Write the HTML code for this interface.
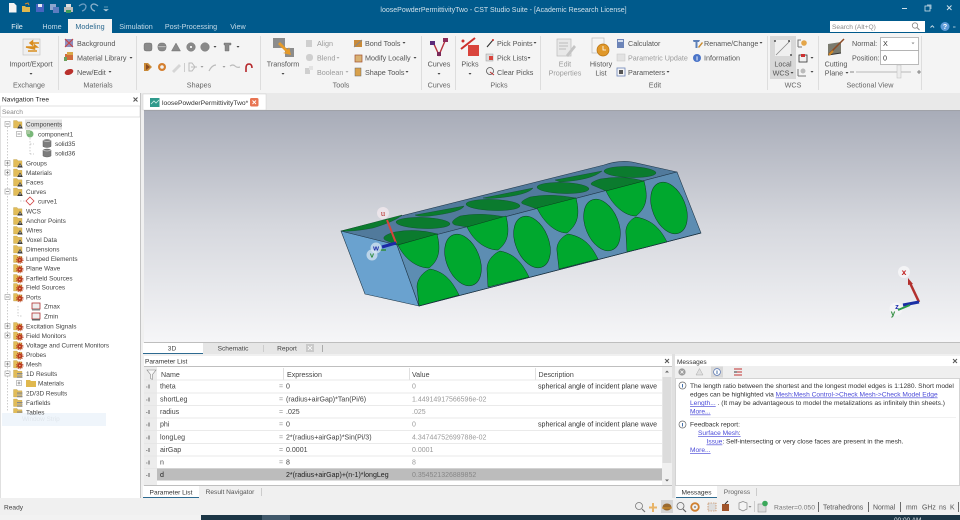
<!DOCTYPE html>
<html><head><meta charset="utf-8"><style>
html,body{margin:0;padding:0;background:#f0f0f0;width:960px;height:520px;overflow:hidden}
svg{position:absolute;left:0;top:0;display:block;filter:blur(.3px)}
text{font-family:"Liberation Sans",sans-serif;font-size:6.5px;fill:#444;white-space:pre}
.r{font-size:7.2px;fill:#555}
.m{text-anchor:middle}
.g{fill:#9b9b9b}
.gl{text-anchor:middle;font-size:7.2px;fill:#666}
.tab{font-size:7.2px;fill:#c5dbe8}
.n{font-size:6.4px;fill:#444}
.p{font-size:7.05px;fill:#444}
.q{font-size:6.6px;fill:#444}
.v{font-size:7px;fill:#9a9a9a}
.k{font-size:6.62px;fill:#333}
.l{font-size:6.62px;fill:#4a4ad8;text-decoration:underline}
</style></head><body>
<svg width="960" height="520" viewBox="0 0 960 520">
<defs>
<linearGradient id="vp" x1="0" y1="0" x2="0" y2="1"><stop offset="0" stop-color="#a8acb8"/><stop offset=".5" stop-color="#d6d8de"/><stop offset="1" stop-color="#f6f6f8"/></linearGradient>
<g id="fw"><path d="M-4.500,-3.500h3.500l1,1.300h4v6.200h-8.500z" fill="#e2bc58" stroke="#b09448" stroke-width=".3"/><path d="M2,0l2.800,4.500h-5.600z" fill="#3a3a3a"/><rect x="1.600" y="1.600" width=".9" height="1.600" fill="#eee"/></g>
<g id="fr"><path d="M-4.500,-3.500h3.500l1,1.300h4v6.200h-8.500z" fill="#e2bc58" stroke="#b09448" stroke-width=".3"/><circle cx="1.800" cy="1.500" r="2.500" fill="#b9361f"/><circle cx="1.800" cy="1.500" r="3.200" fill="none" stroke="#b9361f" stroke-width="1" stroke-dasharray="1 1"/><circle cx="1.800" cy="1.500" r=".8" fill="#f2c08a"/></g>
<g id="fg"><path d="M-4.500,-3.500h3.500l1,1.300h4v6.200h-8.500z" fill="#e2bc58" stroke="#b09448" stroke-width=".3"/><rect x="-1" y="-.5" width="5.500" height="1.100" fill="#888"/><rect x="-1" y="1.300" width="5.500" height="1.100" fill="#aaa"/><rect x="-1" y="3.100" width="5.500" height="1.100" fill="#888"/></g>
<g id="pm"><rect x="-2.500" y="-2.500" width="5" height="5" fill="#fff" stroke="#888" stroke-width=".5"/><path d="M-1.500,0h3" stroke="#555" stroke-width=".6"/></g>
<g id="pp"><rect x="-2.500" y="-2.500" width="5" height="5" fill="#fff" stroke="#888" stroke-width=".5"/><path d="M-1.500,0h3M0,-1.500v3" stroke="#555" stroke-width=".6"/></g>
<g id="gb"><path d="M-4,-3q4,-2 8,0v6q-4,2 -8,0z" fill="#7d7d7d" stroke="#5f5f5f" stroke-width=".5"/><path d="M-4,-3q4,2 8,0" fill="none" stroke="#c5c5c5" stroke-width=".7"/></g>
<g id="rk"><rect x="-5" y=".5" width="1.500" height="1" fill="#999"/><path d="M-2.500,-1.500v4M-1.500,-1.500v4" stroke="#888" stroke-width=".7"/></g>
<g id="dd"><path d="M-1.500,-1h3l-1.500,1.800z" fill="#444"/></g>
</defs>

<!-- window frame -->
<rect width="960" height="520" fill="#f0f0f0"/>
<rect width="960" height="33" fill="#005a8c"/>

<!-- quick access -->
<path d="M9,3h5l2.500,2.500v7h-7.500z" fill="#f4f4f4"/>
<path d="M22,6h3l1,1h4v5h-8z" fill="#e0b84e"/><path d="M25,4l3,-1 1,2" stroke="#d88a2a" fill="none"/>
<rect x="36" y="4" width="8" height="8" fill="#4664c0"/><rect x="38" y="4" width="4" height="3" fill="#e8e8f2"/>
<rect x="50" y="4" width="6" height="6" fill="#8ea6cf"/><rect x="53" y="7" width="6" height="6" fill="#5c7cc0"/>
<rect x="64" y="7" width="9" height="5" fill="#bdbdbd"/><rect x="66" y="4" width="5" height="3" fill="#ddd"/><rect x="66" y="10" width="5" height="3" fill="#3c9a58"/>
<path d="M79,6 q5,-4 7,0 q0,4 -4,5" fill="none" stroke="#6f9ec2" stroke-width="1.300"/>
<path d="M98,6 q-5,-4 -7,0 q0,4 4,5" fill="none" stroke="#8fb2cc" stroke-width="1.300"/>
<path d="M104,7h4M104,9.500h4l-2,1.500z" stroke="#b8cfdd" stroke-width=".6" fill="#b8cfdd"/>

<text x="503.500" y="12" class="tab m" style="font-size:7px;fill:#cfe0ea">loosePowderPermittivityTwo - CST Studio Suite - [Academic Research License]</text>
<!-- window controls -->
<path d="M902,8.500h5" stroke="#cfe0ea" stroke-width="1"/>
<rect x="925" y="6" width="5" height="5" fill="none" stroke="#cfe0ea" stroke-width=".8"/><path d="M927,5h4v4" fill="none" stroke="#cfe0ea" stroke-width=".7"/>
<path d="M947,5.500l4.500,4.500m0,-4.500l-4.500,4.500" stroke="#cfe0ea" stroke-width="1"/>

<!-- tabs -->
<rect x="68" y="19" width="44" height="14" fill="#f4f4f4"/>
<text x="17" y="29" class="tab m" style="fill:#e8f0f5">File</text>
<text x="52" y="29" class="tab m">Home</text>
<text x="90" y="29" class="tab m" style="fill:#2d6a90">Modeling</text>
<text x="136" y="29" class="tab m">Simulation</text>
<text x="191" y="29" class="tab m">Post-Processing</text>
<text x="238" y="29" class="tab m">View</text>

<!-- search -->
<rect x="830" y="21" width="95" height="11" fill="#fff"/>
<text x="832" y="29" style="font-size:6.6px;fill:#888">Search (Alt+Q)</text>
<circle cx="915" cy="25.500" r="2.700" fill="none" stroke="#888" stroke-width=".8"/><path d="M917,27.500l2.500,2.500" stroke="#888" stroke-width="1"/>
<path d="M930.500,27.500l1.800,-1.800 1.800,1.800" fill="none" stroke="#cfe0ea" stroke-width=".9"/>
<circle cx="945" cy="26.500" r="4.500" fill="#5d9bd8"/><text x="945" y="29" class="m" style="fill:#fff;font-size:7px;font-weight:bold">?</text>
<path d="M953,27h2.500" stroke="#cfe0ea" stroke-width=".8"/>

<!-- ribbon -->
<rect y="33" width="960" height="60" fill="#f4f4f4"/>
<g stroke="#dddddd" stroke-width="1">
<path d="M58.500,36v54M136.500,36v54M260.500,36v54M421.500,36v54M455.500,36v54M540.500,36v54M767.500,36v54M818.500,36v54M921.500,36v54"/>
</g>

<!-- Import/Export -->
<rect x="23" y="39" width="17" height="16" fill="#efefef" stroke="#bdbdbd" stroke-width=".6"/>
<path d="M30,43h9M30,43l2.500,-2v4zM26,47h11l-2.500,-2v4zM28,51h9" stroke="#d98d1f" stroke-width="1.500" fill="#d98d1f"/>
<text x="31" y="66.500" class="r m">Import/Export</text>
<use href="#dd" x="31" y="74"/>
<text x="29" y="87.500" class="gl">Exchange</text>

<!-- Materials -->
<rect x="65" y="39" width="8" height="8" fill="#8f8fc0"/><path d="M65,39l8,8M73,39l-8,8" stroke="#c24848" stroke-width="1.200"/>
<rect x="65" y="54" width="8" height="6" fill="#d06c3c"/><rect x="67" y="52" width="6" height="3" fill="#d9a748"/><rect x="64" y="57" width="3" height="4" fill="#6ca05c"/>
<ellipse cx="69" cy="72" rx="4.500" ry="2.800" fill="#b9302c" transform="rotate(-20 69 72)"/>
<text x="77" y="46" class="r">Background</text>
<text x="77" y="60.500" class="r">Material Library</text><use href="#dd" x="131" y="58"/>
<text x="77" y="75" class="r">New/Edit</text><use href="#dd" x="110" y="72"/>
<text x="98" y="87.500" class="gl">Materials</text>

<!-- Shapes -->
<g fill="#8a8a8a" stroke="#666" stroke-width=".4">
<rect x="144" y="43" width="8" height="8" rx="2"/>
<rect x="158" y="43" width="8" height="8" rx="3"/><rect x="158" y="46" width="8" height="1.500" fill="#ccc"/>
<path d="M176,43l4.500,8h-9z"/>
<circle cx="191" cy="47" r="4.300"/><circle cx="191" cy="47" r="1.500" fill="#eee"/>
<circle cx="205" cy="47" r="4.300"/>
<path d="M224,43h7v2h-2v6h-4v-6h-1z"/>
</g>
<use href="#dd" x="215" y="47"/><use href="#dd" x="238" y="47"/>
<path d="M144,63h4l4,4 -4,4h-4z" fill="#c98a38"/><path d="M146,64l4,3 -4,3z" fill="#8a4a20"/>
<circle cx="162" cy="67" r="4" fill="#d47f2f"/><circle cx="162" cy="67" r="1.800" fill="#f2f2f2"/>
<path d="M172,71l7,-7 2,2 -7,7z" fill="#d6d6d6"/>
<path d="M184.500,63v9" stroke="#ccc"/>
<path d="M189,63h3l3,4 -3,4h-3z" fill="none" stroke="#bbb"/><path d="M191,67h6" stroke="#bbb"/>
<use href="#dd" x="202" y="67" opacity=".5"/>
<path d="M209,71q3,-6 7,-6" fill="none" stroke="#bbb" stroke-width="1.200"/><use href="#dd" x="224" y="67" opacity=".5"/>
<path d="M230,66q3,-2 5,0t5,1" fill="none" stroke="#bbb" stroke-width="1.200"/>
<path d="M246,72v-4q0,-4 3,-4 3,0 3,4" fill="none" stroke="#b5262a" stroke-width="1.600"/>
<text x="199" y="87.500" class="gl">Shapes</text>

<!-- Transform -->
<rect x="273" y="38" width="12" height="10" fill="#8c8c8c"/><rect x="285" y="48" width="9" height="9" fill="#8c8c8c"/>
<path d="M280,42l8,8 1,-3 2,8 -8,-2 3,-1 -8,-8z" fill="#e69a28"/>
<text x="283" y="66.500" class="r m">Transform</text><use href="#dd" x="283" y="74"/>

<!-- Tools -->
<g fill="#cfcfcf">
<rect x="306" y="40" width="6" height="7"/><rect x="306" y="54" width="7" height="7" rx="3"/><rect x="305" y="68" width="5" height="6"/><rect x="309" y="66" width="4" height="4" fill="#e2e2e2"/>
</g>
<text x="317" y="46" class="r g">Align</text>
<text x="317" y="60.500" class="r g">Blend</text><use href="#dd" x="338" y="58" opacity=".4"/>
<text x="317" y="75" class="r g">Boolean</text><use href="#dd" x="347" y="72" opacity=".4"/>
<rect x="354" y="40" width="8" height="7" fill="#c98a38"/><path d="M354,47l8,-7" stroke="#888" stroke-width="1"/>
<rect x="355" y="55" width="7" height="7" fill="#d9b172" stroke="#a05030" stroke-width=".7"/>
<rect x="355" y="68" width="6" height="8" fill="#d8a04a" stroke="#666" stroke-width=".5"/>
<text x="365" y="46" class="r">Bond Tools</text><use href="#dd" x="404" y="43"/>
<text x="365" y="60.500" class="r">Modify Locally</text><use href="#dd" x="415" y="58"/>
<text x="365" y="75" class="r">Shape Tools</text><use href="#dd" x="407" y="72"/>
<text x="341" y="87.500" class="gl">Tools</text>

<!-- Curves -->
<path d="M433,42l6,13 6,-14" fill="none" stroke="#b5303c" stroke-width="1.400"/>
<rect x="430" y="41" width="5" height="4" fill="#5a2a7a"/><rect x="443" y="38" width="5" height="4" fill="#8a2a5a"/><rect x="437" y="52" width="4" height="4" fill="#7a2a5a"/>
<text x="439" y="66.500" class="r m">Curves</text><use href="#dd" x="439" y="74"/>
<text x="439" y="87.500" class="gl">Curves</text>

<!-- Picks -->
<path d="M461,49l14,-11" stroke="#cc2e2a" stroke-width="2"/><circle cx="463" cy="41" r="1.500" fill="#cc2e2a"/>
<rect x="468" y="45" width="11" height="11" fill="#d9443c"/>
<text x="470" y="66.500" class="r m">Picks</text><use href="#dd" x="470" y="74"/>
<path d="M487,47l6,-7" stroke="#333" stroke-width="1.100"/><circle cx="493" cy="40" r="1" fill="#cc2e2a"/>
<rect x="486" y="54" width="7" height="7" fill="#ddd" stroke="#999" stroke-width=".5"/><rect x="489" y="56" width="4" height="4" fill="#d9443c"/>
<circle cx="490" cy="71" r="3.500" fill="#eee" stroke="#555" stroke-width=".8"/><path d="M490,72l4,3" stroke="#c03030"/>
<text x="497" y="46" class="r">Pick Points</text><use href="#dd" x="535" y="43"/>
<text x="497" y="60.500" class="r">Pick Lists</text><use href="#dd" x="529" y="58"/>
<text x="497" y="75" class="r">Clear Picks</text>
<text x="499" y="87.500" class="gl">Picks</text>

<!-- Edit -->
<rect x="557" y="39" width="14" height="17" fill="#e8e8e8" stroke="#bbb" stroke-width=".7"/>
<path d="M559,43h9M559,46h9M559,49h7" stroke="#bbb"/>
<path d="M566,55l8,-10 2,2 -8,10z" fill="#c4c4c4"/>
<text x="565" y="66.500" class="r m g">Edit</text>
<text x="565" y="75.500" class="r m g">Properties</text>
<rect x="592" y="38" width="12" height="15" fill="#f4f4f4" stroke="#bbb" stroke-width=".7"/>
<circle cx="603" cy="50" r="6" fill="#e0982a" stroke="#b87414" stroke-width=".7"/><path d="M603,46v4h3" stroke="#fff" fill="none" stroke-width=".8"/>
<text x="601" y="66.500" class="r m">History</text>
<text x="601" y="75.500" class="r m">List</text>
<rect x="617" y="39" width="7" height="9" fill="#6c84b8"/><rect x="618" y="40" width="5" height="2" fill="#d4dded"/>
<rect x="617" y="54" width="8" height="7" fill="#e2e2e2" stroke="#c4c4c4" stroke-width=".5"/>
<rect x="617" y="68" width="8" height="8" fill="none" stroke="#6c84b8" stroke-width=".8"/><rect x="619" y="70" width="4" height="4" fill="#555"/>
<text x="628" y="46" class="r">Calculator</text>
<text x="628" y="60.500" class="r g">Parametric Update</text>
<text x="628" y="75" class="r">Parameters</text><use href="#dd" x="668" y="72"/>
<path d="M693,40h7l-1,2h-1.500v6h-2v-6h-2z" fill="#5c7fb8"/><path d="M698,47l4,-5 1,1 -4,5z" fill="#c88a2e"/>
<circle cx="697" cy="58" r="4" fill="#4a74c8"/><text x="697" y="60.500" class="m" style="fill:#fff;font-size:6.5px;font-weight:bold">i</text>
<text x="704" y="46" class="r">Rename/Change</text><use href="#dd" x="761" y="43"/>
<text x="704" y="60.500" class="r">Information</text>
<text x="655" y="87.500" class="gl">Edit</text>

<!-- WCS -->
<rect x="770" y="36" width="26" height="43" fill="#d8d8d8"/>
<rect x="775" y="40" width="16" height="16" fill="#f0f0f0"/>
<path d="M776,55l14,-14" stroke="#888" stroke-width=".8"/>
<path d="M775,40v2M789,40v2M791,54v2" stroke="#444" stroke-width="1.400"/>
<text x="783" y="66.500" class="r m">Local</text>
<text x="781" y="75.500" class="r m">WCS</text><use href="#dd" x="792" y="73"/>
<path d="M798,47v-7h3M798,47h4" stroke="#777" fill="none"/><circle cx="804" cy="43" r="2.800" fill="#e4a64a"/>
<rect x="799" y="55" width="8" height="7" fill="#f0f0f0" stroke="#333" stroke-width=".8"/><rect x="801" y="54" width="4" height="3" fill="#cc3030"/>
<path d="M798,76v-7M798,76h8" stroke="#777"/><circle cx="803" cy="71" r="2.500" fill="#bbb"/>
<use href="#dd" x="812" y="58"/><use href="#dd" x="812" y="72"/>
<text x="793" y="87.500" class="gl">WCS</text>

<!-- Sectional -->
<path d="M828,44l13,-2v11l-13,2z" fill="#7a7a6e"/><path d="M828,55l13,-2" stroke="#333"/>
<path d="M829,54l15,-15" stroke="#8c4a24" stroke-width="1.500"/><path d="M829,55l4,-4" stroke="#d08a2a" stroke-width="2"/>
<text x="836" y="66.500" class="r m">Cutting</text>
<text x="834" y="75.500" class="r m">Plane</text><use href="#dd" x="847" y="73"/>
<text x="852" y="46" class="r">Normal:</text>
<text x="852" y="60.500" class="r">Position:</text>
<rect x="880.500" y="37.500" width="38" height="13" fill="#fff" stroke="#ababab" stroke-width=".8"/>
<rect x="880.500" y="50.500" width="38" height="14" fill="#fff" stroke="#ababab" stroke-width=".8"/>
<text x="883" y="46" class="r" style="fill:#333">X</text><text x="883" y="60.500" class="r" style="fill:#333">0</text>
<use href="#dd" x="913" y="43.500" opacity=".6"/>
<path d="M850,72h4M917,72h4M919,70v4" stroke="#666" stroke-width=".8"/>
<path d="M856,72h55" stroke="#ccc" stroke-width="1.400"/>
<rect x="897" y="65" width="4" height="13" fill="#ececec" stroke="#bbb" stroke-width=".5"/>
<text x="870" y="87.500" class="gl">Sectional View</text>

<!-- doc tab strip -->
<rect x="140" y="93" width="820" height="17" fill="#e9e9e9"/>
<rect x="143" y="94" width="123" height="16" fill="#fff" stroke="#d0d0d0" stroke-width=".5"/>
<rect x="150" y="98" width="9.500" height="9" fill="#2f9a8c"/><path d="M151,104l3,-3 2,2 3,-3" stroke="#d0efe8" fill="none" stroke-width=".8"/>
<text x="162" y="105" style="font-size:6.7px;fill:#333">loosePowderPermittivityTwo*</text>
<rect x="250" y="98" width="8.500" height="8.500" rx="1.500" fill="#e87452"/><path d="M252.500,100.500l3.500,3.500m0,-3.500l-3.500,3.500" stroke="#fff" stroke-width=".9"/>

<!-- viewport -->
<rect x="144" y="110" width="816" height="232" fill="url(#vp)"/>
<path d="M144,110.500h816" stroke="#999" stroke-width=".5"/>

<!-- 3D model -->
<path d="M341,231L397,245L419,306L365,294Z" fill="#6aa2cf" stroke="#223a4c" stroke-width=".6"/>
<path d="M341,231L604,165Q618,160 632,162L677,172L397,245Z" fill="#517a9c" stroke="#223a4c" stroke-width=".6"/>
<path d="M397,245L677,172L701,233L419,306Z" fill="#5d8db2" stroke="#223a4c" stroke-width=".6"/>
<g fill="#0b7b2e" stroke="#0a3e1c" stroke-width=".3">
<ellipse cx="423" cy="223" rx="27" ry="5.500" transform="rotate(2 423 223)"/>
<ellipse cx="493" cy="205" rx="27" ry="5.500" transform="rotate(2 493 205)"/>
<ellipse cx="563" cy="188" rx="26" ry="5.500" transform="rotate(2 563 188)"/>
<ellipse cx="630" cy="172" rx="26" ry="5.500" transform="rotate(2 630 172)"/>
<path d="M341,231L402,215Q396,221 373,228Q352,232 341,231Z"/>
<path d="M415,215L464,206Q462,212 430,216Q418,217 415,215Z"/>
<path d="M483,198L533,188Q528,195 497,198Q488,199 483,198Z"/>
<path d="M555,180L602,171Q592,180 560,182Z"/>
<path d="M397,245L438,234Q415,228 395,232Q380,236 385,240Z"/>
<path d="M467,227L506,217Q480,212 460,216Q448,222 455,225Z"/>
<path d="M537,209L576,198Q550,193 530,197Q518,202 523,204Z"/>
<path d="M606,191L644,181Q623,175 600,179Q588,183 592,185Z"/>
</g>
<g fill="#00a82e" stroke="#0a3e1c" stroke-width=".5">
<ellipse cx="463" cy="260" rx="16.500" ry="27" transform="rotate(-22 463 260)"/>
<ellipse cx="532" cy="242" rx="16.500" ry="27" transform="rotate(-22 532 242)"/>
<ellipse cx="602" cy="225" rx="16.500" ry="27" transform="rotate(-22 602 225)"/>
<ellipse cx="669" cy="208" rx="16.500" ry="27" transform="rotate(-22 669 208)"/>
<path d="M398,245L437,234C440,246 441,259 429,268C418,268 405,260 398,245Z"/>
<path d="M467,227L506,216C509,229 510,241 498,250C487,250 474,242 467,227Z"/>
<path d="M537,208L576,198C579,211 580,223 567,233C556,233 544,223 537,208Z"/>
<path d="M606,191L644,181C647,193 649,206 636,216C625,216 613,206 606,191Z"/>
<path d="M419,306L459,295C453,283 446,272 430,269C423,272 417,279 417,287Z"/>
<path d="M488,287L529,277C523,265 516,254 500,251C493,254 487,261 487,269Z"/>
<path d="M559,269L598,259C592,247 585,237 568,234C561,237 556,244 557,251Z"/>
<path d="M627,252L667,242C661,230 653,220 636,217C629,220 625,227 626,234Z"/>
</g>
<path d="M419,306L701,233" stroke="#18303f" stroke-width=".7"/>
<!-- local axes -->
<path d="M387,220L396,243" stroke="#d6453c" stroke-width="2"/>
<circle cx="383" cy="213" r="6" fill="#f0e8ec" opacity=".85"/><text x="383" y="216" class="m" style="font-family:'Liberation Serif',serif;font-size:8.500px;fill:#b52a26">u</text>
<path d="M382,247L396,243" stroke="#1c2aa6" stroke-width="3"/><path d="M379,250l7,0" stroke="#2f8c3a" stroke-width="1.500"/>
<circle cx="376" cy="248" r="5.500" fill="#d8e6f2" opacity=".75"/><circle cx="372" cy="255" r="5.500" fill="#d8e6f2" opacity=".75"/>
<text x="376" y="250.500" class="m" style="font-size:7.500px;font-weight:bold;fill:#1c2aa6">w</text>
<text x="372" y="257.500" class="m" style="font-size:7.500px;font-weight:bold;fill:#2a8a3a">v</text>

<!-- global axes -->
<circle cx="904" cy="272" r="6" fill="#f4f4f6"/><circle cx="896" cy="309" r="6.500" fill="#f4f4f6"/>
<text x="904" y="275" class="m" style="font-size:8.500px;font-weight:bold;fill:#c02020">x</text>
<path d="M919,302L910,283" stroke="#b2302e" stroke-width="2.500"/><path d="M908,278l5,6 -5,1z" fill="#b2302e"/>
<path d="M919,302L903,305" stroke="#1b2fa4" stroke-width="3"/><path d="M898,310l12,-5" stroke="#2a9a48" stroke-width="2"/>
<text x="897" y="309" class="m" style="font-size:7.500px;font-weight:bold;fill:#2030b0">z</text>
<text x="893" y="316" class="m" style="font-size:8px;font-weight:bold;fill:#2a8a3a">y</text>

<!-- nav panel -->
<rect x="0" y="93" width="140" height="407" fill="#fff"/>
<text x="2" y="101.500" style="font-size:6.500px;fill:#222" textLength="47">Navigation Tree</text>
<path d="M133.500,97.500l4,4m0,-4l-4,4" stroke="#555" stroke-width="1.100"/>
<rect x=".5" y="106" width="139.500" height="11" fill="#fff" stroke="#d4d4d4" stroke-width=".7"/>
<text x="2" y="114" style="font-size:6.600px;fill:#888">Search</text>
<path d="M.5,118v382" stroke="#ccc" stroke-width=".6"/><path d="M140.500,93v407" stroke="#c4c4c4"/>
<path d="M7.500,124v288" stroke="#999" stroke-width=".5" stroke-dasharray="1.500 1.500"/>
<path d="M20,134v-1M30,138v16M30,144h4M30,154h4M20,201h7M18,306v10h5" stroke="#999" stroke-width=".5" stroke-dasharray="1.500 1.500" fill="none"/>
<rect x="25" y="119.500" width="37" height="10" fill="#e2e2e2"/>
<!-- tree icons -->
<use href="#pm" x="7.500" y="124"/><use href="#fw" x="18" y="124"/>
<use href="#pm" x="19" y="134"/><circle cx="30" cy="134" r="3.500" fill="#7ab87a"/><rect x="26" y="130" width="4" height="4" fill="#a8c8a0"/>
<use href="#gb" x="47" y="143.500"/><use href="#gb" x="47" y="153"/>
<use href="#pp" x="7.500" y="163"/><use href="#fw" x="18" y="163"/>
<use href="#pp" x="7.500" y="172.500"/><use href="#fw" x="18" y="172.500"/>
<use href="#fw" x="18" y="182"/>
<use href="#pm" x="7.500" y="191.500"/><use href="#fw" x="18" y="191.500"/>
<path d="M30,197.500l4,4 -4,4 -4,-4z" fill="#fff" stroke="#d04040" stroke-width=".8" transform="translate(0,-.5)"/>
<use href="#fw" x="18" y="211"/><use href="#fw" x="18" y="220.500"/><use href="#fw" x="18" y="230"/><use href="#fw" x="18" y="239.500"/><use href="#fw" x="18" y="249"/>
<use href="#fr" x="18" y="258.500"/><use href="#fr" x="18" y="268"/><use href="#fr" x="18" y="278"/><use href="#fr" x="18" y="287"/>
<use href="#pm" x="7.500" y="297"/><use href="#fr" x="18" y="297"/>
<rect x="32" y="303" width="8" height="6" fill="#eee" stroke="#b03030" stroke-width=".8"/><rect x="32" y="309" width="8" height="1.500" fill="#888"/>
<rect x="32" y="313" width="8" height="6" fill="#eee" stroke="#b03030" stroke-width=".8"/><rect x="32" y="319" width="8" height="1.500" fill="#666"/>
<use href="#pp" x="7.500" y="326"/><use href="#fr" x="18" y="326"/>
<use href="#pp" x="7.500" y="335.500"/><use href="#fr" x="18" y="335.500"/>
<use href="#fr" x="18" y="345"/><use href="#fr" x="18" y="354.500"/>
<use href="#pp" x="7.500" y="364"/><use href="#fr" x="18" y="364"/>
<use href="#pm" x="7.500" y="373.500"/><use href="#fg" x="18" y="373.500"/>
<use href="#pp" x="19" y="383"/>
<path d="M26,380h4l1,1h5v6h-10z" fill="#e0b84e"/>
<use href="#fg" x="18" y="393"/><use href="#fg" x="18" y="402.500"/><use href="#fg" x="18" y="412"/>
<rect x="2" y="413" width="104" height="13" fill="#eff5fb"/>
<text x="22" y="421" style="font-size:6.400px;fill:#e0e6ec">Window Strip</text>
<!-- tree labels -->
<text x="26" y="126.500" class="n">Components</text>
<text x="38" y="136.500" class="n">component1</text>
<text x="55" y="146" class="n">solid35</text>
<text x="55" y="155.500" class="n">solid36</text>
<text x="26" y="165.500" class="n">Groups</text>
<text x="26" y="175" class="n">Materials</text>
<text x="26" y="184.500" class="n">Faces</text>
<text x="26" y="194" class="n">Curves</text>
<text x="38" y="203.500" class="n">curve1</text>
<text x="26" y="213.500" class="n">WCS</text>
<text x="26" y="223" class="n">Anchor Points</text>
<text x="26" y="232.500" class="n">Wires</text>
<text x="26" y="242" class="n">Voxel Data</text>
<text x="26" y="251.500" class="n">Dimensions</text>
<text x="26" y="261" class="n">Lumped Elements</text>
<text x="26" y="270.500" class="n">Plane Wave</text>
<text x="26" y="280.500" class="n">Farfield Sources</text>
<text x="26" y="289.500" class="n">Field Sources</text>
<text x="26" y="299.500" class="n">Ports</text>
<text x="44" y="308.500" class="n">Zmax</text>
<text x="44" y="318.500" class="n">Zmin</text>
<text x="26" y="328.500" class="n">Excitation Signals</text>
<text x="26" y="338" class="n">Field Monitors</text>
<text x="26" y="347.500" class="n">Voltage and Current Monitors</text>
<text x="26" y="357" class="n">Probes</text>
<text x="26" y="366.500" class="n">Mesh</text>
<text x="26" y="376" class="n">1D Results</text>
<text x="38" y="385.500" class="n">Materials</text>
<text x="26" y="395.500" class="n">2D/3D Results</text>
<text x="26" y="405" class="n">Farfields</text>
<text x="26" y="414.500" class="n">Tables</text>

<!-- 3D tabs bar -->
<rect x="144" y="342" width="528" height="12" fill="#e6e6e6"/>
<rect x="672" y="342" width="288" height="12" fill="#e6e6e6"/>
<path d="M144,342.500h816" stroke="#b0b0b0" stroke-width=".7"/>
<rect x="143" y="343" width="60" height="11" fill="#fff"/><path d="M143,353.500h60" stroke="#2d6a90"/>
<text x="172" y="350.500" class="q m">3D</text>
<text x="233" y="350.500" class="q m">Schematic</text>
<path d="M263.500,345v7" stroke="#ccc"/>
<text x="287" y="350.500" class="q m">Report</text>
<rect x="306" y="344" width="8" height="8" fill="#c9c9c9"/><path d="M308,346l4,4m0,-4l-4,4" stroke="#fff" stroke-width=".8"/>
<path d="M322.500,345v7" stroke="#aaa"/>

<!-- Parameter panel -->
<rect x="144" y="356" width="528" height="10" fill="#fff"/>
<text x="145" y="363.500" style="font-size:6.500px;fill:#333">Parameter List</text>
<path d="M665,359l4,4m0,-4l-4,4" stroke="#555" stroke-width="1"/>
<rect x="144" y="366" width="528" height="120" fill="#fff"/>
<path d="M144,366.500h528M144,485.500h528" stroke="#aaa" stroke-width=".8"/>
<rect x="144" y="367" width="13" height="118" fill="#ececec"/>
<path d="M147,370h9l-3.500,4.500v5l-2,-1v-4z" fill="#f8f8f8" stroke="#888" stroke-width=".6"/>
<path d="M283.500,368v12M409.500,368v12M535.500,368v12" stroke="#d4d4d4" stroke-width=".7"/>
<text x="161" y="377" class="p">Name</text><text x="287" y="377" class="p">Expression</text><text x="412" y="377" class="p">Value</text><text x="538.500" y="377" class="p">Description</text>
<g stroke="#e4e4e4" stroke-width=".7">
<path d="M144,380h518M144,393h518M144,405.500h518M144,418h518M144,430.500h518M144,443.500h518M144,456h518M144,468.500h518"/>
</g>
<rect x="157" y="468.500" width="505" height="12" fill="#bcbcbc"/>
<use href="#rk" x="151" y="386"/><use href="#rk" x="151" y="399"/><use href="#rk" x="151" y="411.500"/><use href="#rk" x="151" y="424"/><use href="#rk" x="151" y="437"/><use href="#rk" x="151" y="449.500"/><use href="#rk" x="151" y="462"/><use href="#rk" x="151" y="474.500"/>
<g>
<text x="281" y="388.500" class="v m">=</text><text x="281" y="401.500" class="v m">=</text><text x="281" y="414" class="v m">=</text><text x="281" y="426.500" class="v m">=</text><text x="281" y="439.500" class="v m">=</text><text x="281" y="452" class="v m">=</text><text x="281" y="464.500" class="v m">=</text>
</g>
<text x="160" y="388.500" class="p">theta</text><text x="286" y="388.500" class="p">0</text><text x="412" y="388.500" class="v">0</text><text x="538" y="388.500" class="p" style="fill:#333">spherical angle of incident plane wave</text>
<text x="160" y="401.500" class="p">shortLeg</text><text x="286" y="401.500" class="p">(radius+airGap)*Tan(Pi/6)</text><text x="412" y="401.500" class="v">1.44914917566596e-02</text>
<text x="160" y="414" class="p">radius</text><text x="286" y="414" class="p">.025</text><text x="412" y="414" class="v">.025</text>
<text x="160" y="426.500" class="p">phi</text><text x="286" y="426.500" class="p">0</text><text x="412" y="426.500" class="v">0</text><text x="538" y="426.500" class="p" style="fill:#333">spherical angle of incident plane wave</text>
<text x="160" y="439.500" class="p">longLeg</text><text x="286" y="439.500" class="p">2*(radius+airGap)*Sin(Pi/3)</text><text x="412" y="439.500" class="v">4.34744752699788e-02</text>
<text x="160" y="452" class="p">airGap</text><text x="286" y="452" class="p">0.0001</text><text x="412" y="452" class="v">0.0001</text>
<text x="160" y="464.500" class="p">n</text><text x="286" y="464.500" class="p">8</text><text x="412" y="464.500" class="v">8</text>
<text x="160" y="477" class="p" style="fill:#222">d</text><text x="286" y="477" class="p" style="fill:#222">2*(radius+airGap)+(n-1)*longLeg</text><text x="412" y="477" class="v" style="fill:#868686">0.354521326889852</text>
<!-- scrollbar -->
<rect x="662" y="367" width="10" height="118" fill="#f0f0f0"/>
<rect x="662.500" y="377" width="9" height="86" fill="#dcdcdc"/>
<path d="M665,372.500l2,-2 2,2z" fill="#666"/><path d="M665,479.500h4l-2,2z" fill="#666"/>

<!-- bottom tab row left -->
<rect x="144" y="486" width="528" height="12" fill="#f0f0f0"/>
<rect x="143" y="486" width="56" height="12" fill="#fff"/><path d="M143,497.500h56" stroke="#2d6a90"/>
<text x="171" y="494.500" class="q m" style="fill:#333">Parameter List</text>
<text x="230" y="494" class="q m" style="fill:#555">Result Navigator</text>
<path d="M261.500,488v8" stroke="#ccc"/>

<!-- Messages -->
<rect x="672" y="354" width="3" height="146" fill="#e0e0e0"/>
<rect x="675" y="356" width="285" height="10" fill="#fff"/>
<text x="677" y="364" style="font-size:6.500px;fill:#333">Messages</text>
<path d="M953,359l4,4m0,-4l-4,4" stroke="#555" stroke-width="1"/>
<rect x="675" y="366" width="285" height="12" fill="#efefef"/>
<circle cx="682" cy="372" r="3.600" fill="#9c9c9c"/><path d="M680.500,370.500l3,3m0,-3l-3,3" stroke="#fff" stroke-width=".8"/>
<path d="M699.500,368.500l3.500,6.500h-7z" fill="#e0e0e0" stroke="#aaa" stroke-width=".5"/>
<rect x="711" y="366.500" width="12" height="11" fill="#d8d8d8"/><circle cx="717" cy="372" r="3.400" fill="#fff" stroke="#5070b0" stroke-width=".7"/><path d="M717,370.500v3.500" stroke="#3060a0" stroke-width=".9"/>
<path d="M734,369h8M734,372h8M734,375h8" stroke="#c03030" stroke-width="1"/><path d="M734,372h3" stroke="#333" stroke-width="1"/>
<rect x="675.500" y="378.500" width="284" height="107" fill="#fff" stroke="#bbb" stroke-width=".6"/>
<circle cx="682.500" cy="385.500" r="3.500" fill="#fff" stroke="#666" stroke-width=".7"/><path d="M682.500,384v3.500" stroke="#3060a0" stroke-width=".9"/>
<circle cx="682.500" cy="424.500" r="3.500" fill="#fff" stroke="#666" stroke-width=".7"/><path d="M682.500,423v3.500" stroke="#3060a0" stroke-width=".9"/>
<text x="690" y="388" class="k">The length ratio between the shortest and the longest model edges is 1:1280. Short model</text>
<text x="690" y="396.500" class="k">edges can be highlighted via <tspan class="l">Mesh:Mesh Control-&gt;Check Mesh-&gt;Check Model Edge</tspan></text>
<text x="690" y="405" class="k"><tspan class="l">Length...</tspan> . (It may be advantageous to model the metalizations as infinitely thin sheets.)</text>
<text x="690" y="413.500" class="l">More...</text>
<path d="M690,417.500h266" stroke="#e4e4e4" stroke-width=".6"/>
<text x="690" y="426.500" class="k">Feedback report:</text>
<text x="698" y="435" class="l">Surface Mesh<tspan style="fill:#333;text-decoration:none">:</tspan></text>
<text x="706.500" y="443.500" class="k"><tspan class="l">Issue</tspan>: Self-intersecting or very close faces are present in the mesh.</text>
<text x="690" y="452" class="l">More...</text>
<rect x="675" y="486" width="285" height="12" fill="#f0f0f0"/>
<rect x="676" y="486" width="41" height="12" fill="#fff"/><path d="M676,497.500h41" stroke="#2d6a90"/>
<text x="696.500" y="494.500" class="q m" style="fill:#333">Messages</text>
<text x="737" y="494" class="q m" style="fill:#666">Progress</text>
<path d="M756.500,488v8" stroke="#ccc"/>

<!-- status bar -->
<rect y="498" width="960" height="17" fill="#f0f0f0"/>
<rect x="0" y="500" width="143" height="15" fill="#f0f0f0"/>
<text x="4" y="509.500" class="q">Ready</text>
<rect x="661" y="500" width="12" height="13" fill="#d4d4d4"/>
<circle cx="639" cy="506" r="3.500" fill="#eee" stroke="#777" stroke-width=".8"/><path d="M642,509l3,3" stroke="#777" stroke-width="1.200"/>
<path d="M653,503v9M649,507.500h8" stroke="#e8b468" stroke-width="2"/>
<ellipse cx="667" cy="507" rx="4.500" ry="3.500" fill="#9a6a30"/><path d="M662,508h10" stroke="#d0902c" stroke-width="1.200"/>
<circle cx="680.500" cy="506" r="3.500" fill="#eee" stroke="#666" stroke-width=".8"/><path d="M683,509l3,3" stroke="#666" stroke-width="1.200"/>
<circle cx="695" cy="507" r="3.800" fill="none" stroke="#d08030" stroke-width="1.800"/><circle cx="695" cy="507" r="1" fill="#888"/>
<rect x="708" y="503" width="8" height="8" fill="#ddd" stroke="#c07030" stroke-width=".6" stroke-dasharray="1.500 1"/>
<rect x="722" y="504" width="7" height="7" fill="#a0552c"/><path d="M725,504l3,-3" stroke="#333" stroke-width="1"/>
<path d="M739,503l4,-1.500 4,1.500v6l-4,2 -4,-2z" fill="#f4f4f4" stroke="#888" stroke-width=".7"/><use href="#dd" x="750" y="507" opacity=".6"/>
<path d="M754.500,501v11" stroke="#ccc"/>
<rect x="758" y="504" width="8" height="8" fill="#ddd" stroke="#888" stroke-width=".5"/><circle cx="765" cy="503.500" r="2.800" fill="#3aa85a"/>
<g>
<text x="774" y="509.500" style="font-size:6.800px;fill:#777">Raster=0.050</text>
<text x="823" y="509.500" style="font-size:6.900px;fill:#555">Tetrahedrons</text>
<text x="873" y="509.500" style="font-size:6.900px;fill:#555">Normal</text>
<text x="906" y="509.500" style="font-size:6.900px;fill:#555">mm</text>
<text x="922" y="509.500" style="font-size:6.900px;fill:#555">GHz</text>
<text x="939" y="509.500" style="font-size:6.900px;fill:#555">ns</text>
<text x="950" y="509.500" style="font-size:6.900px;fill:#555">K</text>
</g>
<path d="M818.500,502v10M868.500,502v10M900.500,502v10M958.500,502v10" stroke="#333" stroke-width=".7"/>

<!-- taskbar -->
<rect y="515" width="960" height="5" fill="#1c3646"/>
<rect x="0" y="515" width="201" height="5" fill="#f2f2f2"/>
<rect x="262" y="515" width="28" height="5" fill="#40586a"/>
<text x="894" y="522" style="font-size:6.500px;fill:#dfe6ea">00:00 AM</text>
</svg>
</body></html>
